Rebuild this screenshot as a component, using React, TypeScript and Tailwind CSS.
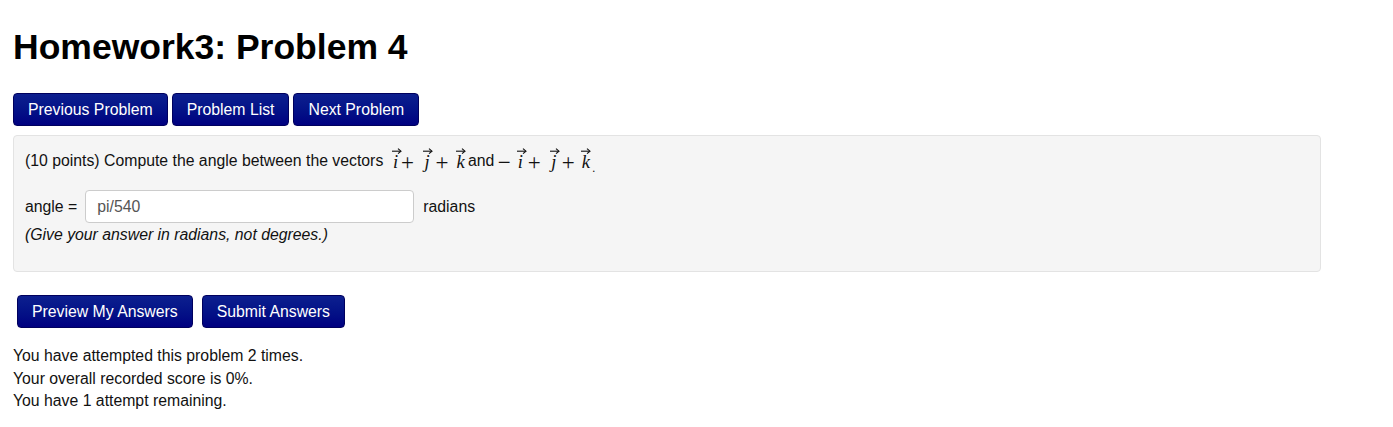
import React from "react";

const navBtn =
  "h-[33px] flex items-center px-[14px] rounded-[4px] border border-[#00005e] bg-gradient-to-b from-[#0d1f8f] to-[#000080] text-white text-[15.8px] leading-[22px]";

function Vec({ letter, className }: { letter: string; className: string }) {
  return (
    <span
      className={
        "relative inline-block text-center italic font-['Liberation_Serif',serif] text-[18.5px] leading-none " +
        className
      }
    >
      {letter}
      <svg
        className="absolute left-[1px] top-[-6px]"
        width="11"
        height="7"
        viewBox="0 0 11 7"
      >
        <path d="M1 4.2 H9.5" stroke="#111" strokeWidth="1.1" fill="none" />
        <path d="M7 1.6 L10 4.2 L7 6.6" stroke="#111" strokeWidth="1.1" fill="none" />
      </svg>
    </span>
  );
}

function Op({ c, className }: { c: string; className: string }) {
  return (
    <span
      className={
        "inline-block text-center font-['Liberation_Serif',serif] text-[23px] leading-none " + className
      }
    >
      {c}
    </span>
  );
}

export default function App() {
  return (
    <div className="min-h-screen bg-white text-[#111] font-['Liberation_Sans',Arial,sans-serif] pt-[27px] pl-[13px]">
      <h1 className="text-[35.5px] leading-[40px] font-bold text-black">Homework3: Problem 4</h1>

      {/* problem navigation */}
      <div className="mt-[26px] flex gap-[4px]">
        <button className={navBtn}>Previous Problem</button>
        <button className={navBtn}>Problem List</button>
        <button className={navBtn}>Next Problem</button>
      </div>

      {/* problem body */}
      <div className="mt-[9px] w-[1308px] h-[137px] rounded-[4px] border border-[#e3e3e3] bg-[#f5f5f5] px-[11px] pt-[14px] text-[15.8px] leading-[22px]">
        <p className="flex items-center h-[22px]">
          <span className="w-[365px] shrink-0">(10 points) Compute the angle between the vectors</span>
          <span className="inline-flex items-center mt-[2px]">
            <Vec letter="i" className="w-[11px]" />
            <Op c="+" className="w-[12px]" />
            <Vec letter="j" className="w-[12px] ml-[8px]" />
            <Op c="+" className="w-[14px] ml-[2px]" />
            <Vec letter="k" className="w-[13px] ml-[5px]" />
          </span>
          <span className="ml-[1px]">and</span>
          <span className="inline-flex items-center ml-[3px] mt-[2px]">
            <Op c="−" className="w-[14px]" />
            <Vec letter="i" className="w-[10px] ml-[4px]" />
            <Op c="+" className="w-[14px] ml-[2px]" />
            <Vec letter="j" className="w-[11px] ml-[7px]" />
            <Op c="+" className="w-[14px] ml-[2px]" />
            <Vec letter="k" className="w-[13px] ml-[4px]" />
            <span className="font-['Liberation_Serif',serif] text-[12px] leading-none self-end">.</span>
          </span>
        </p>

        <div className="mt-[18px] flex items-center">
          <span>angle =</span>
          <input
            readOnly
            value="pi/540"
            className="ml-[8px] w-[329px] h-[33px] rounded-[4px] border border-[#cccccc] bg-white pl-[11px] pr-[6px] text-[15.8px] text-[#555] outline-none"
          />
          <span className="ml-[9px]">radians</span>
        </div>
        <p className="italic mt-[1px]">(Give your answer in radians, not degrees.)</p>
      </div>

      {/* submission */}
      <div className="mt-[23px] ml-[4px] flex gap-[9px]">
        <button className={navBtn}>Preview My Answers</button>
        <button className={navBtn}>Submit Answers</button>
      </div>

      <div className="mt-[17px] text-[15.8px] leading-[22.5px]">
        <p>You have attempted this problem 2 times.</p>
        <p>Your overall recorded score is 0%.</p>
        <p>You have 1 attempt remaining.</p>
      </div>
    </div>
  );
}
